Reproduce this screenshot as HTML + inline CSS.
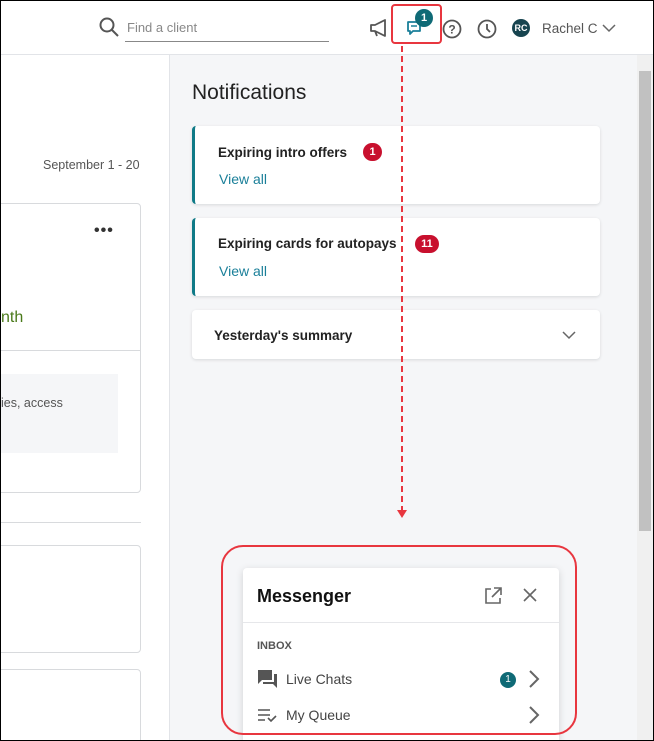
<!DOCTYPE html>
<html><head><meta charset="utf-8"><style>
*{box-sizing:border-box;margin:0;padding:0}
html,body{width:654px;height:741px;overflow:hidden}
body{font-family:"Liberation Sans",sans-serif;background:#fff}
#w{position:relative;width:654px;height:741px;overflow:hidden;border:1px solid #000}
.abs{position:absolute}
.card{position:absolute;background:#fff;border-radius:4px;box-shadow:0 1px 3px rgba(0,0,0,.12)}
.teal{border-left:3px solid #0f7a87}
.t{font-weight:bold;font-size:13.5px;color:#222}
.link{color:#1a7f99;font-size:14px}
.badge{display:inline-block;background:#c8102e;color:#fff;font-weight:bold;font-size:11px;border-radius:10px;text-align:center;height:18px;line-height:18px}
</style></head><body><div id="w">
<div class="abs" style="left:0;top:0;width:652px;height:54px;border-bottom:1px solid #e2e4e8;background:#fff"></div>
<svg class="abs" style="left:97px;top:15px" width="22" height="22" viewBox="0 0 22 22"><circle cx="9" cy="9" r="6.5" fill="none" stroke="#555" stroke-width="2"/><path d="M14 14l6 6" stroke="#555" stroke-width="2"/></svg>
<div class="abs" style="left:126px;top:19px;font-size:13px;color:#888">Find a client</div>
<div class="abs" style="left:124px;top:40px;width:204px;height:1px;background:#888"></div>
<svg class="abs" style="left:368px;top:17px" width="22" height="20" viewBox="0 0 22 20"><path d="M2 7h4l10-5v16L6 13H2z M6 13l2 5" fill="none" stroke="#555" stroke-width="1.8" stroke-linejoin="round"/></svg>
<div class="abs" style="left:390px;top:3px;width:51px;height:40px;border:2px solid #e8363f;border-radius:4px"></div>
<svg class="abs" style="left:404px;top:17px" width="22" height="22" viewBox="0 0 22 22"><path d="M3 4h12v9H8l-3 3v-3H3z" fill="none" stroke="#1a7f99" stroke-width="1.8" stroke-linejoin="round"/><path d="M6 8h6" stroke="#1a7f99" stroke-width="1.5"/></svg>
<div class="abs" style="left:414px;top:8px;width:18px;height:18px;border-radius:9px;background:#0f6a76;color:#fff;font-weight:bold;font-size:11px;text-align:center;line-height:18px">1</div>
<svg class="abs" style="left:440px;top:17px" width="22" height="22" viewBox="0 0 22 22"><circle cx="11" cy="11" r="8.5" fill="none" stroke="#555" stroke-width="1.8"/><text x="11" y="15.5" font-size="12" font-family="Liberation Sans" text-anchor="middle" fill="#555" font-weight="bold">?</text></svg>
<svg class="abs" style="left:475px;top:17px" width="22" height="22" viewBox="0 0 22 22"><circle cx="11" cy="11" r="8.5" fill="none" stroke="#555" stroke-width="1.8"/><path d="M11 6v5l3 3" fill="none" stroke="#555" stroke-width="1.8"/></svg>
<div class="abs" style="left:511px;top:18px;width:18px;height:18px;border-radius:9px;background:#17444f;color:#fff;font-weight:bold;font-size:9px;text-align:center;line-height:18px">RC</div>
<div class="abs" style="left:541px;top:20px;font-size:13.5px;color:#555">Rachel C</div>
<svg class="abs" style="left:601px;top:22px" width="14" height="10" viewBox="0 0 14 10"><path d="M1 2l6 6 6-6" fill="none" stroke="#666" stroke-width="1.5"/></svg>
<div class="abs" style="left:42px;top:157px;font-size:12.5px;color:#555">September 1 - 20</div>
<div class="abs" style="left:-5px;top:202px;width:145px;height:290px;border:1px solid #d8dadd;border-radius:4px"></div>
<div class="abs" style="left:93px;top:221px;font-size:16px;color:#333;font-weight:bold;letter-spacing:1px">•••</div>
<div class="abs" style="left:0;top:308px;font-size:16px;color:#4a7a1a">nth</div>
<div class="abs" style="left:0;top:349px;width:140px;height:1px;background:#d8dadd"></div>
<div class="abs" style="left:0;top:373px;width:117px;height:79px;background:#f5f6f8"></div>
<div class="abs" style="left:0;top:395px;font-size:12.5px;color:#555">ies, access</div>
<div class="abs" style="left:0;top:521px;width:140px;height:1px;background:#d8dadd"></div>
<div class="abs" style="left:-5px;top:544px;width:145px;height:108px;border:1px solid #d8dadd;border-radius:4px"></div>
<div class="abs" style="left:-5px;top:668px;width:145px;height:100px;border:1px solid #d8dadd;border-radius:4px"></div>
<div class="abs" style="left:168px;top:54px;width:468px;height:690px;background:#f5f6f8;border-left:1px solid #e2e4e8"></div>
<div class="abs" style="left:636px;top:54px;width:16px;height:690px;background:#f0f0f0"></div>
<div class="abs" style="left:638px;top:70px;width:12px;height:460px;background:#c1c1c1"></div>
<div class="abs" style="left:191px;top:80px;font-size:21px;color:#222">Notifications</div>
<div class="card teal" style="left:191px;top:125px;width:408px;height:78px"></div>
<div class="abs t" style="left:217px;top:144px">Expiring intro offers</div>
<div class="abs badge" style="left:362px;top:142px;width:19px">1</div>
<div class="abs link" style="left:218px;top:170px">View all</div>
<div class="card teal" style="left:191px;top:217px;width:408px;height:78px"></div>
<div class="abs t" style="left:217px;top:235px">Expiring cards for autopays</div>
<div class="abs badge" style="left:414px;top:234px;width:24px">11</div>
<div class="abs link" style="left:218px;top:262px">View all</div>
<div class="card" style="left:191px;top:309px;width:408px;height:49px"></div>
<div class="abs t" style="left:213px;top:327px">Yesterday's summary</div>
<svg class="abs" style="left:561px;top:329px" width="14" height="10" viewBox="0 0 14 10"><path d="M1 2l6 6 6-6" fill="none" stroke="#666" stroke-width="1.5"/></svg>
<div class="abs" style="left:400px;top:45px;width:0;height:466px;border-left:2px dashed #e8363f"></div>
<svg class="abs" style="left:396px;top:509px" width="10" height="10" viewBox="0 0 10 10"><path d="M0 0h10L5 8z" fill="#e8363f"/></svg>
<div class="card" style="left:242px;top:567px;width:316px;height:190px;box-shadow:0 2px 8px rgba(0,0,0,.15)"></div>
<div class="abs" style="left:256px;top:585px;font-size:18px;font-weight:bold;color:#111">Messenger</div>
<svg class="abs" style="left:482px;top:585px" width="20" height="20" viewBox="0 0 20 20"><path d="M8 3H3v14h14v-5" fill="none" stroke="#666" stroke-width="1.6"/><path d="M11 2h7v7M18 2l-9 9" fill="none" stroke="#666" stroke-width="1.6"/></svg>
<svg class="abs" style="left:521px;top:586px" width="16" height="16" viewBox="0 0 16 16"><path d="M2 2l12 12M14 2L2 14" stroke="#666" stroke-width="1.6"/></svg>
<div class="abs" style="left:242px;top:621px;width:316px;height:1px;background:#e6e7ea"></div>
<div class="abs" style="left:256px;top:639px;font-size:11px;font-weight:bold;color:#555">INBOX</div>
<svg class="abs" style="left:256px;top:668px" width="22" height="20" viewBox="0 0 22 20"><path d="M1 1h14v10H5l-4 4z" fill="#555"/><path d="M17 5h3v14l-4-4H6v-2h11z" fill="#555"/></svg>
<div class="abs" style="left:285px;top:670px;font-size:14px;color:#444">Live Chats</div>
<div class="abs" style="left:499px;top:671px;width:16px;height:16px;border-radius:8px;background:#0f6a76;color:#fff;font-size:10px;text-align:center;line-height:16px">1</div>
<svg class="abs" style="left:526px;top:668px" width="14" height="20" viewBox="0 0 14 20"><path d="M3 2l8 8-8 8" fill="none" stroke="#666" stroke-width="2"/></svg>
<svg class="abs" style="left:256px;top:706px" width="22" height="16" viewBox="0 0 22 16"><path d="M1 3h12M1 8h12M1 13h7" stroke="#555" stroke-width="1.6"/><path d="M11 11l3 3 5-5" fill="none" stroke="#555" stroke-width="1.6"/></svg>
<div class="abs" style="left:285px;top:706px;font-size:14px;color:#444">My Queue</div>
<svg class="abs" style="left:526px;top:704px" width="14" height="20" viewBox="0 0 14 20"><path d="M3 2l8 8-8 8" fill="none" stroke="#666" stroke-width="2"/></svg>
<div class="abs" style="left:220px;top:544px;width:356px;height:190px;border:2px solid #e8363f;border-radius:22px"></div>
</div></body></html>
